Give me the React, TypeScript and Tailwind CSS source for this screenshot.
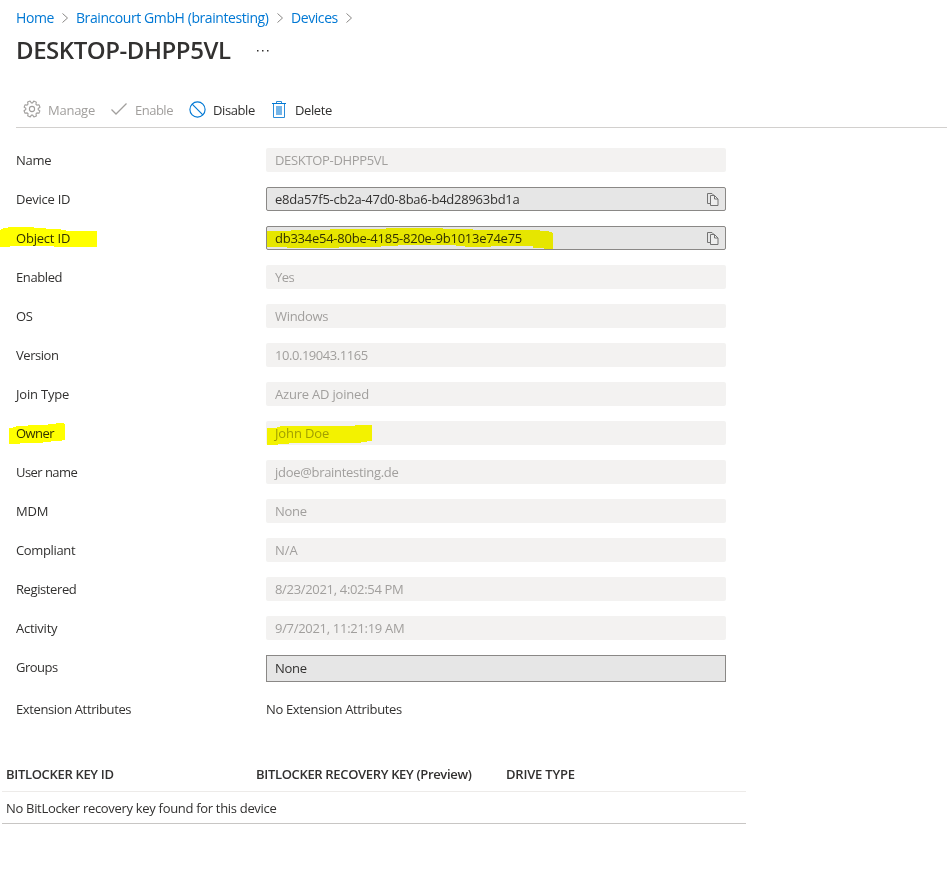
import clsx from 'clsx';

type Row = {
  label: string;
  value: string;
  labelClass?: string;
  valueClass?: string;
  copyable?: boolean;
  labelMark?: string;
  valueMark?: string;
};

// Marks are polygons measured from the top left corner of the row
const rows: Row[] = [
  { label: 'Name', value: 'DESKTOP-DHPP5VL', valueClass: 'tracking-[-0.33px]' },
  { label: 'Device ID', value: 'e8da57f5-cb2a-47d0-8ba6-b4d28963bd1a', copyable: true },
  {
    label: 'Object ID',
    value: 'db334e54-80be-4185-820e-9b1013e74e75',
    copyable: true,
    labelClass: 'tracking-[-0.2px]',
    labelMark: '-16,4 -12,2 -5,1 18,1 18,2 42,3 52,5 81,5 81,21 38,21 38,20 -6,20 -6,21 -16,21',
    valueMark:
      '251,5 275,5 275,4 352,3 370,3 370,2 425,2 429,3 457,3 457,4 516,4 531,5 535,6 537,7 537,23 528,23 528,22 517,22 517,20 475,20 475,21 449,21 449,20 431,19 382,19 382,20 347,21 299,22 271,22 271,21 251,21',
  },
  { label: 'Enabled', value: 'Yes', labelClass: 'tracking-[-0.4px]', valueClass: 'tracking-[-0.5px]' },
  { label: 'OS', value: 'Windows', valueClass: 'tracking-[-0.3px]' },
  { label: 'Version', value: '10.0.19043.1165', labelClass: 'tracking-[-0.45px]', valueClass: 'tracking-[-0.45px]' },
  { label: 'Join Type', value: 'Azure AD joined', labelClass: 'tracking-[-0.2px]', valueClass: 'tracking-[-0.2px]' },
  {
    label: 'Owner',
    value: 'John Doe',
    labelClass: 'tracking-[-0.55px]',
    valueClass: 'tracking-[-0.12px]',
    labelMark: '-7,7 0,6 0,5 24,4 40,3 40,2 47,2 49,3 49,19 43,20 27,21 27,22 4,22 4,23 -7,23',
    valueMark: '251,7 261,7 261,6 267,5 339,5 339,4 356,4 356,20 351,20 351,21 339,22 273,22 273,23 262,23 262,24 251,24',
  },
  { label: 'User name', value: 'jdoe@braintesting.de', labelClass: 'tracking-[-0.55px]', valueClass: 'tracking-[-0.3px]' },
  { label: 'MDM', value: 'None' },
  { label: 'Compliant', value: 'N/A', labelClass: 'tracking-[-0.35px]', valueClass: 'tracking-[0px]' },
  { label: 'Registered', value: '8/23/2021, 4:02:54 PM', labelClass: 'tracking-[-0.4px]', valueClass: 'tracking-[-0.32px]' },
  { label: 'Activity', value: '9/7/2021, 11:21:19 AM', valueClass: 'tracking-[-0.3px]' },
];

function Chevron() {
  return (
    <svg width="8" height="12" viewBox="0 0 8 12" fill="none" stroke="#8a8886" className="shrink-0">
      <path d="M1.5 1.5 6.5 6l-5 4.5" />
    </svg>
  );
}

function CopyIcon() {
  return (
    <svg width="12" height="13" viewBox="0 0 12 13" fill="none" stroke="#737373" className="shrink-0">
      <path d="M3.5 10.5h-3V.5H5l1.5 1.5" />
      <path d="M3.5 2.5h4l3.5 3.5v6.5H3.5z" fill="#eeeeee" />
      <path d="M7.5 2.5V6H11" />
    </svg>
  );
}

function GearIcon() {
  return (
    <svg width="18" height="18" viewBox="0 0 18 18" fill="none" stroke="#a19f9d" strokeWidth="1.1" strokeLinejoin="round" className="-mt-px">
      <path
        transform="rotate(22.5 9 9)"
        d="M7.6 1h2.8l.4 2.1 1.2.5 1.8-1.2 1.9 1.9-1.2 1.8.5 1.2 2 .4v2.6l-2 .4-.5 1.2 1.2 1.8-1.9 1.9-1.8-1.2-1.2.5-.4 2.1H7.6l-.4-2.1-1.2-.5-1.8 1.2-1.9-1.9 1.2-1.8-.5-1.2-2-.4V7.7l2-.4.5-1.2-1.2-1.8 1.9-1.9L6 3.6l1.2-.5z"
      />
      <circle cx="9" cy="9" r="2.6" />
    </svg>
  );
}

function CheckIcon() {
  return (
    <svg width="17" height="14" viewBox="0 0 17 14" fill="none" stroke="#a19f9d" strokeWidth="1.3" className="-mt-px">
      <path d="m.5 7.5 4.5 4.5L15.5 1.5" />
    </svg>
  );
}

function BlockIcon() {
  return (
    <svg width="17" height="17" viewBox="0 0 17 17" fill="none" stroke="#0078d4" strokeWidth="1.15" className="-mt-px">
      <circle cx="8.5" cy="8.5" r="7.6" />
      <path d="m3.2 3.2 10.6 10.6" />
    </svg>
  );
}

function TrashIcon() {
  return (
    <svg width="14" height="17" viewBox="0 0 14 17" fill="none" stroke="#2b8cd8" className="-mt-px">
      <path d="M4 5h6v9H4z" fill="#75b5e8" stroke="none" />
      <path d="M1.5 3v13.5h11V3M4.5 2V.5h5V2" />
      <path d="M0 2.5h14" stroke="#0078d4" />
    </svg>
  );
}

function Mark({ points }: { points: string }) {
  return (
    <svg width="1" height="1" className="absolute left-0 top-0 overflow-visible mix-blend-multiply pointer-events-none">
      <polygon points={points} fill="#ffff00" shapeRendering="crispEdges" />
    </svg>
  );
}

function Field({ row }: { row: Row }) {
  return (
    <div className="relative flex h-6 items-center">
      <div className="w-[250px]">
        <span className={row.labelClass}>{row.label}</span>
      </div>
      <div
        className={clsx(
          'flex h-6 w-[460px] items-center justify-between rounded-[2px]',
          row.copyable ? 'border border-[#8a8886] bg-[#e6e6e6] pl-2 pr-[6px]' : 'bg-[#f3f2f1] px-[9px] text-[#a19f9d]'
        )}
      >
        <span className={row.valueClass}>{row.value}</span>
        {row.copyable && <CopyIcon />}
      </div>
      {row.labelMark && <Mark points={row.labelMark} />}
      {row.valueMark && <Mark points={row.valueMark} />}
    </div>
  );
}

export default function App() {
  return (
    <main className="h-[888px] w-[947px] overflow-hidden whitespace-nowrap bg-white font-['Open_Sans',sans-serif] text-[13px] leading-[18px] tracking-[-0.25px] text-[#323130]">
      <nav className="flex h-9 items-center pl-4 text-[14px] tracking-[-0.42px] text-[#0078d4]">
        <a className="w-[45px]">Home</a>
        <Chevron />
        <a className="ml-[7px] w-[200px]">Braincourt GmbH (braintesting)</a>
        <Chevron />
        <a className="ml-[7px] w-[54px]">Devices</a>
        <Chevron />
      </nav>

      <header className="flex h-7 items-center pl-4">
        <h1 className="w-[241px] text-[24px] font-semibold leading-7 tracking-[-0.45px]">DESKTOP-DHPP5VL</h1>
        <svg width="12" height="2" viewBox="0 0 12 2" fill="#323130" className="mt-[2px]">
          <path d="M0 0h1.5v1.5H0zM5 0h1.5v1.5H5zM10 0h1.5v1.5H10z" />
        </svg>
      </header>

      <div className="ml-4 mt-[28px] flex h-9 items-center border-b border-[#d2d0ce] pl-[7px]">
        <div className="flex w-[88px] items-center gap-[7px] text-[#a19f9d]">
          <GearIcon />
          Manage
        </div>
        <div className="flex w-[78px] items-center gap-[7px] tracking-[-0.5px] text-[#a19f9d]">
          <CheckIcon />
          Enable
        </div>
        <div className="flex w-[83px] items-center gap-[7px] tracking-[-0.4px]">
          <BlockIcon />
          Disable
        </div>
        <div className="flex items-center gap-[9px] tracking-[-0.4px]">
          <TrashIcon />
          Delete
        </div>
      </div>

      <section className="flex flex-col gap-[15px] pl-4 pt-5">
        {rows.map((row) => (
          <Field key={row.label} row={row} />
        ))}
        <div className="flex h-[27px] items-center">
          <div className="w-[250px] pb-[3px] tracking-[-0.5px]">Groups</div>
          <div className="flex h-[27px] w-[460px] items-center border border-[#8a8886] bg-[#e6e6e6] px-2 pb-px">None</div>
        </div>
        <div className="flex h-6 items-center">
          <div className="w-[250px] tracking-[-0.38px]">Extension Attributes</div>
          <div className="tracking-[-0.34px]">No Extension Attributes</div>
        </div>
      </section>

      <section className="ml-[2px] mt-[37px] w-[744px]">
        <div className="flex h-[34px] items-center border-b border-[#edebe9] pb-px pl-1 font-semibold">
          <div className="w-[250px] tracking-[-0.32px]">BITLOCKER KEY ID</div>
          <div className="w-[250px] tracking-[-0.33px]">BITLOCKER RECOVERY KEY (Preview)</div>
          <div className="tracking-[-0.2px]">DRIVE TYPE</div>
        </div>
        <div className="flex h-8 items-center border-b border-[#c8c6c4] pl-1 tracking-[-0.31px]">
          No BitLocker recovery key found for this device
        </div>
      </section>
    </main>
  );
}
